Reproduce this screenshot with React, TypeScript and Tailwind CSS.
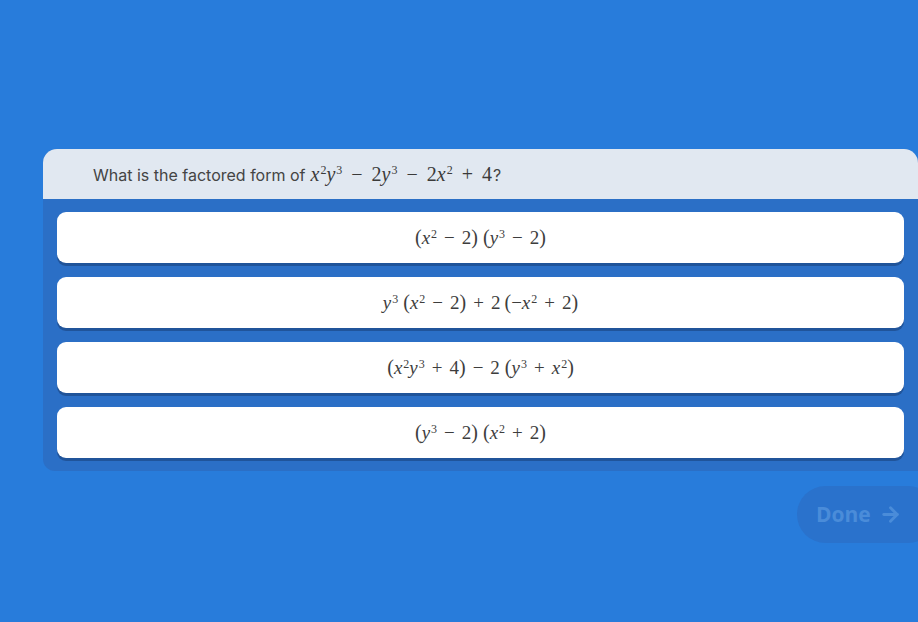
import React from 'react';
import { ArrowRight } from 'lucide-react';

const V = ({ children }: { children: React.ReactNode }) => <i className="italic">{children}</i>;
const S = ({ children }: { children: React.ReactNode }) => (
  <span className="text-[12px] not-italic align-[0.55em] ml-[1px]">{children}</span>
);
const Op = ({ children, w = 'mx-[7px]' }: { children: React.ReactNode; w?: string }) => (
  <span className={w}>{children}</span>
);
const P = ({ children }: { children: React.ReactNode }) => <span className="text-[20px]">{children}</span>;

const options: React.ReactNode[] = [
  <>
    <P>(</P><V>x</V><S>2</S><Op>−</Op>2<P>)</P>
    <span className="ml-[5px]" />
    <P>(</P><V>y</V><S>3</S><Op>−</Op>2<P>)</P>
  </>,
  <>
    <V>y</V><S>3</S>
    <span className="ml-[5px]" />
    <P>(</P><V>x</V><S>2</S><Op>−</Op>2<P>)</P><Op>+</Op>2
    <span className="ml-[4px]" />
    <P>(</P>−<V>x</V><S>2</S><Op>+</Op>2<P>)</P>
  </>,
  <>
    <P>(</P><V>x</V><S>2</S><V>y</V><S>3</S><Op>+</Op>4<P>)</P><Op>−</Op>2
    <span className="ml-[5px]" />
    <P>(</P><V>y</V><S>3</S><Op>+</Op><V>x</V><S>2</S><P>)</P>
  </>,
  <>
    <P>(</P><V>y</V><S>3</S><Op>−</Op>2<P>)</P>
    <span className="ml-[5px]" />
    <P>(</P><V>x</V><S>2</S><Op>+</Op>2<P>)</P>
  </>,
];

export default function App() {
  return (
    <div className="w-[918px] h-[622px] bg-[#287cdb] overflow-hidden flex flex-col">
      <div className="ml-[43px] mt-[149px] w-[875px] rounded-t-[14px] rounded-bl-[12px] bg-[#2b6fc6] overflow-hidden">
        <div className="h-[50px] bg-[#e1e8f1] flex items-center pl-[50px] text-[16px] text-[#444] font-['Inter','Noto_Sans',sans-serif]">
          <span className="mt-[2px]">What is the factored form of</span>
          <span className="ml-[5px] font-['Liberation_Serif',serif] text-[20px] text-[#3a3a3a] whitespace-nowrap">
            <V>x</V><S>2</S><V>y</V><S>3</S><Op w="mx-[9px]">−</Op>2<V>y</V><S>3</S><Op w="mx-[9px]">−</Op>2<V>x</V><S>2</S><Op w="mx-[9px]">+</Op>4
          </span>
          <span className="mt-[2px] ml-[1px]">?</span>
        </div>
        <div className="px-[14px] pt-[13px] pb-[13px] flex flex-col gap-[14px]">
          {options.map((o, i) => (
            <div
              key={i}
              className="h-[51px] bg-white rounded-[9px] shadow-[0_3px_0_rgba(20,50,100,0.45)] flex items-center justify-center font-['Liberation_Serif',serif] text-[19px] text-[#3d3d3d]"
            >
              <span className="whitespace-nowrap">{o}</span>
            </div>
          ))}
        </div>
      </div>
      <div className="flex justify-end mt-[15px]">
        <div className="w-[140px] h-[57px] mr-[-19px] rounded-full bg-[#2a72cc] flex items-center pl-[19px] gap-[8px] text-[#4a8cd9] font-['Open_Sans',sans-serif] font-bold text-[21px]">
          <span>Done</span>
          <ArrowRight size={23} strokeWidth={3} />
        </div>
      </div>
    </div>
  );
}
